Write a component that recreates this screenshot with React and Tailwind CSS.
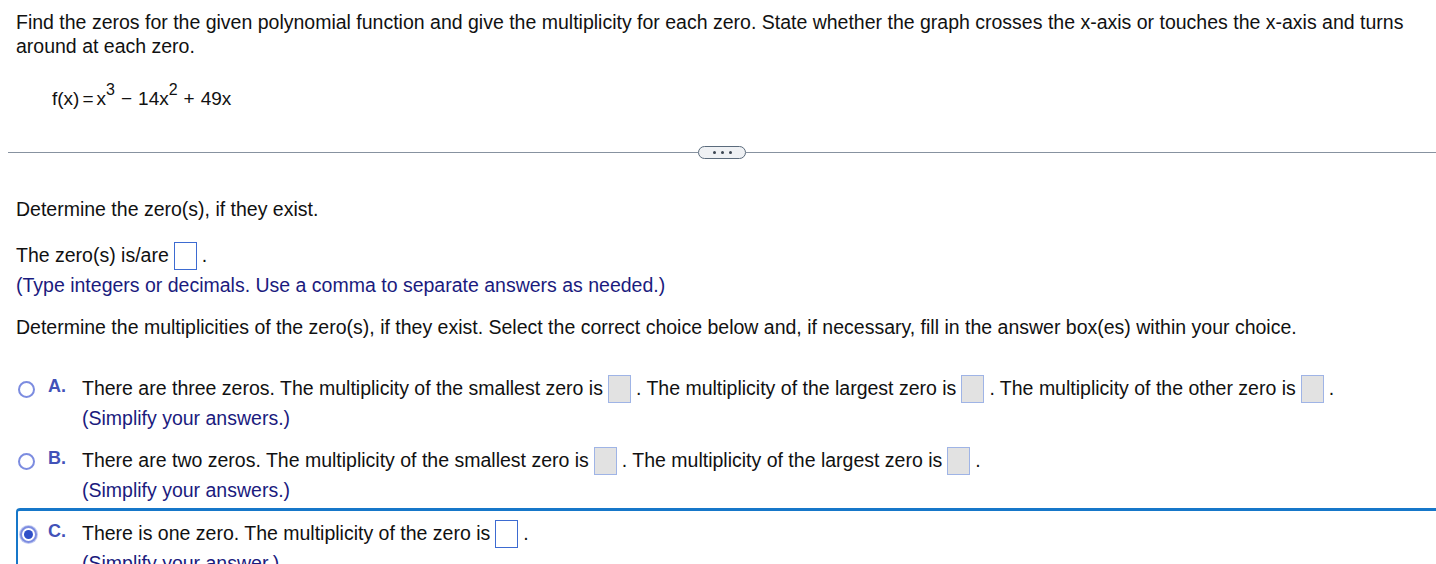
import React from 'react';

const ink = 'text-[#111]';

function Blank({ active }) {
  return active ? (
    <span className="inline-block align-middle w-[23px] h-[28px] border border-[#3d6bd1] bg-white mx-[5px]" />
  ) : (
    <span className="inline-block align-middle w-[23px] h-[28px] border border-[#9fb4e6] bg-[#e2e2e2] mx-[5px]" />
  );
}

function Radio({ checked }) {
  return checked ? (
    <span className="w-[17px] h-[17px] rounded-full border-2 border-[#7c8ce0] bg-white flex items-center justify-center shrink-0 shadow-[0_0_0_1px_#c3cbf2]">
      <span className="w-[9px] h-[9px] rounded-full bg-[#2f4fc8]" />
    </span>
  ) : (
    <span className="w-[17px] h-[17px] rounded-full border-2 border-[#7c8ce0] bg-white shrink-0" />
  );
}

function Option({ letter, checked, children, note }) {
  return (
    <div className="flex items-start">
      <div
        className={`w-[82px] shrink-0 flex items-center h-[28px] ${checked ? 'pl-[20px] gap-[11px]' : 'pl-[18px] gap-[13px]'}`}
      >
        <Radio checked={checked} />
        <span className="text-[18px] font-bold text-[#4252b8] -mt-[5px]">{letter}</span>
      </div>
      <div>
        <div className={`h-[28px] flex items-center ${ink}`}>{children}</div>
        <div className="text-[#1b1b7e] leading-[30px]">{note}</div>
      </div>
    </div>
  );
}

export default function App() {
  return (
    <div className="w-[1436px] h-[564px] overflow-hidden bg-white text-[19.5px] font-['Liberation_Sans',Arial,sans-serif]">
      <div className={`px-4 pt-[10px] leading-[24px] ${ink}`}>
        <p className="-mr-3">
          Find the zeros for the given polynomial function and give the multiplicity for each zero. State whether the graph crosses the x-axis or touches the x-axis and turns around at each zero.
        </p>
        <p className="pl-[36px] mt-[21px] h-[40px] flex items-center text-[19px]">
          f(x)<span className="mx-[3px]">=</span>x<sup className="text-[16px] -top-[9px]">3</sup>
          <span className="mx-[6px]">−</span>14x<sup className="text-[16px] -top-[9px]">2</sup>
          <span className="mx-[6px]">+</span>49x
        </p>
      </div>

      <div className="mt-[26px] ml-2 flex items-center h-[14px]">
        <div className="flex-1 h-px bg-[#8792a0]" />
        <div className="w-[48px] h-[13px] rounded-full border border-[#5b6b7c] bg-[#eff1f4] flex items-center justify-center gap-[5px]">
          <span className="w-[3px] h-[3px] rounded-full bg-[#3c4652]" />
          <span className="w-[3px] h-[3px] rounded-full bg-[#3c4652]" />
          <span className="w-[3px] h-[3px] rounded-full bg-[#3c4652]" />
        </div>
        <div className="flex-1 h-px bg-[#8792a0]" />
      </div>

      <div className={`px-4 ${ink}`}>
        <p className="mt-[38px] leading-[24px]">Determine the zero(s), if they exist.</p>
        <p className="mt-[20px] h-[30px] flex items-center">
          The zero(s) is/are<Blank active />.
        </p>
        <p className="text-[#1b1b7e] leading-[28px]">(Type integers or decimals. Use a comma to separate answers as needed.)</p>
        <p className="mt-[16px] leading-[24px]">
          Determine the multiplicities of the zero(s), if they exist. Select the correct choice below and, if necessary, fill in the answer box(es) within your choice.
        </p>
      </div>

      <div className="mt-[36px]">
        <Option letter="A." note="(Simplify your answers.)">
          There are three zeros. The multiplicity of the smallest zero is<Blank />. The multiplicity of the largest zero is<Blank />. The multiplicity of the other zero is<Blank />.
        </Option>
        <div className="mt-[14px]">
          <Option letter="B." note="(Simplify your answers.)">
            There are two zeros. The multiplicity of the smallest zero is<Blank />. The multiplicity of the largest zero is<Blank />.
          </Option>
        </div>
        <div className="mt-[3px] ml-4 border-t-[3px] border-l-2 border-[#1677c9] rounded-tl-[4px] pt-[9px]">
          <div className="-ml-[18px]">
            <Option letter="C." checked note="(Simplify your answer.)">
              There is one zero. The multiplicity of the zero is<Blank active />.
            </Option>
          </div>
        </div>
      </div>
    </div>
  );
}
